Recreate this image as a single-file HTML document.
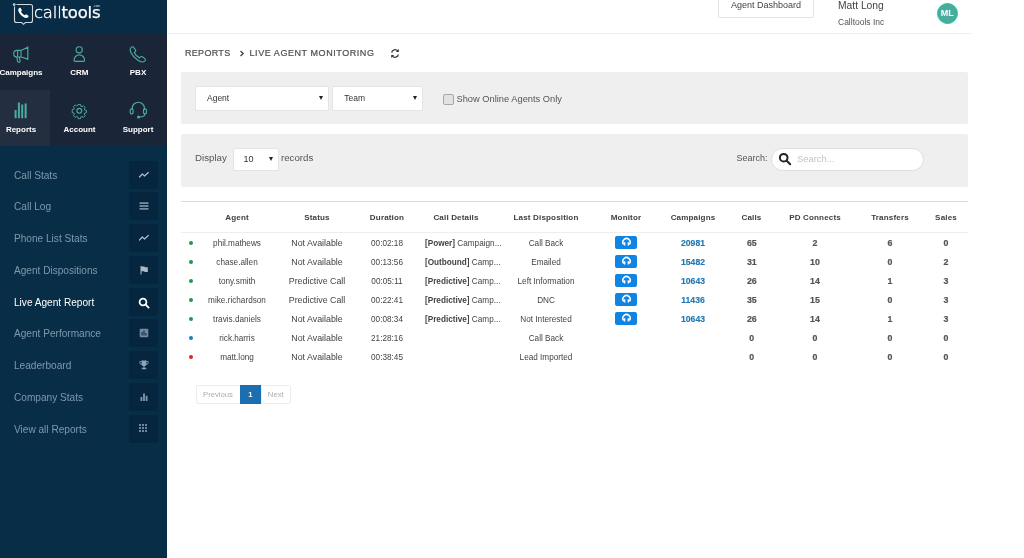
<!DOCTYPE html>
<html lang="en">
<head>
<meta charset="utf-8">
<title>Live Agent Monitoring</title>
<style>
*{box-sizing:border-box;margin:0;padding:0}
html,body{width:1024px;height:558px;overflow:hidden;background:#fff;font-family:"Liberation Sans","DejaVu Sans",sans-serif;color:#333}
#wrap{position:absolute;left:0;top:0;width:1024px;height:558px;will-change:transform}
.abs{position:absolute}
#side{position:absolute;left:0;top:0;width:167px;height:558px;background:#082d47}
#logo{position:absolute;left:0;top:0;width:167px;height:34px;background:#082c46;z-index:2}
#grid{position:absolute;left:0;top:33px;width:167px;height:113px;background:#1b2538}
.tile{position:absolute;width:50px;height:57px;text-align:center}
.tile.on{background:#242e41}
.lb{position:absolute;transform:translateX(-50%);font-size:8px;line-height:10px;font-weight:bold;color:#fff;white-space:nowrap}
.mi{position:absolute;left:0;width:167px;height:28px}
.mi b{position:absolute;left:14px;top:1px;line-height:28px;font-size:10.100px;font-weight:normal;color:#8198ad;white-space:nowrap}
.mi.on b{color:#fff}
.mi i{position:absolute;left:129px;top:0;width:29px;height:28px;background:#06263f;display:block}
.mi i svg{position:absolute;left:50%;top:50%;transform:translate(-50%,-50%)}
#head{position:absolute;left:168px;top:0;width:804px;height:34px;border-bottom:1px solid #f0f0f0;background:#fff}
.panel{position:absolute;left:181px;width:787px;background:#efefef;border-radius:2px}
.sel{position:absolute;background:#fff;border:1px solid #e4e4e4;border-radius:2px;font-size:9px;color:#333;white-space:nowrap}
.sel em{position:absolute;right:5px;top:50%;margin-top:-2px;width:0;height:0;border-left:2.500px solid transparent;border-right:2.500px solid transparent;border-top:4px solid #222}
.tx{position:absolute;white-space:nowrap;font-size:9px;color:#555}
.t{position:absolute;white-space:nowrap;transform:translateX(-50%);text-align:center;line-height:12px}
.h{font-size:8.050px;letter-spacing:.15px;font-weight:bold;color:#404040}
.c{font-size:8.200px;color:#444;line-height:12px}
.s{font-size:8.850px}
.c b{color:#444}
.n{font-size:8.800px;color:#555;font-weight:bold;-webkit-text-stroke:.2px #555}
.l{font-size:8.600px;color:#2277b5;font-weight:bold;-webkit-text-stroke:.15px #2277b5}
.dot{position:absolute;width:4px;height:4px;border-radius:50%;left:188.700px}
.mon{position:absolute;left:614.700px;width:22.500px;height:13px;background:#0f84e3;border-radius:2px}
.mon svg{position:absolute;left:6.100px;top:1.400px}
.pg{position:absolute;top:384.500px;height:19px;line-height:18px;font-size:7.700px;color:#adadad;text-align:center;border:1px solid #ededed;background:#fff}
</style>
</head>
<body><div id="wrap">
<div id="side">
  <div id="logo">
    <svg class="abs" style="left:11px;top:2px" width="24" height="24" viewBox="0 0 24 24" fill="none" stroke="#cfd8e0" stroke-width="1.1">
      <path d="M5.500 2.500h14a2 2 0 0 1 2 2v14a2 2 0 0 1-2 2h-5.200l-1.800 1.800-1.800-1.800H5.500a2 2 0 0 1-2-2v-14"/>
      <circle cx="3.200" cy="2.600" r="0.900"/>
      <path d="M8 6.200c.5-.6 1.300-.6 1.700 0l1 1.500c.3.500.2 1-.2 1.400l-.5.500c.8 1.700 2 2.900 3.700 3.700l.5-.5c.4-.4.900-.5 1.400-.2l1.500 1c.6.400.6 1.200 0 1.700-1.200 1.100-2.800.900-4.600-.2-2.200-1.400-3.700-3-4.700-5-.8-1.500-.8-2.900.2-3.900z" fill="#fff" stroke="none"/>
    </svg>
    <div class="abs" style="left:34px;top:2.500px;font-size:16.500px;line-height:20px;color:#fff;letter-spacing:-0.2px;font-family:'DejaVu Sans','Liberation Sans',sans-serif;font-weight:200;white-space:nowrap;-webkit-text-stroke:.35px #fff">call<span style="font-weight:normal;-webkit-text-stroke:.25px #fff">tools</span></div>
    <div class="abs" style="left:93.500px;top:4.500px;font-size:3px;line-height:3px;color:#dfe6ec;letter-spacing:0">.com</div>
  </div>
  <div id="grid">
    <div class="tile on" style="left:0;top:57px;width:50px;height:56px"></div>
    <!-- Campaigns -->
    <svg class="abs" style="left:11px;top:11.500px" width="20" height="20" viewBox="0 0 20 20" fill="none" stroke="#4baaa4" stroke-width="1.150" stroke-linejoin="round" stroke-linecap="round"><path d="M10 5.400H6a3.300 3.300 0 0 0 0 6.600h4zM10 5.400l6.800-3.200v11.900L10 12M16.800 1.800v12.700M6.600 6v5.400M5.800 12.200l.8 4.200a1 1 0 0 0 1 .8h.5a1 1 0 0 0 1-1.200l-.7-3.800"/></svg>
    <span class="lb" style="left:21px;top:35px">Campaigns</span>
    <!-- CRM -->
    <svg class="abs" style="left:69px;top:11.500px" width="20" height="20" viewBox="0 0 20 20" fill="none" stroke="#4baaa4" stroke-width="1.150"><circle cx="10.200" cy="4.800" r="3.100"/><path d="M5 15.300a5.300 5.400 0 0 1 10.600 0a1 1 0 0 1-1 1h-8.600a1 1 0 0 1-1-1z"/></svg>
    <span class="lb" style="left:79.300px;top:35px">CRM</span>
    <!-- PBX -->
    <svg class="abs" style="left:128.700px;top:12px" width="18.400" height="18.400" viewBox="0 0 18 18" fill="none" stroke="#4baaa4" stroke-width="1.100" stroke-linejoin="round"><path d="M2 2.500c.8-1 2-1 2.700 0l1.600 2.300c.4.600.3 1.300-.2 1.800l-.9.900c1.100 2.300 2.800 4 5.100 5.100l.9-.9c.5-.5 1.200-.6 1.800-.2l2.300 1.600c1 .7 1 1.900 0 2.700-1.700 1.400-4.200.9-7.200-1.300C5 12.300 3.100 10 1.900 7.400.9 5.300.9 3.600 2 2.500z"/></svg>
    <span class="lb" style="left:138px;top:35px">PBX</span>
    <!-- Reports -->
    <svg class="abs" style="left:11px;top:67px" width="20" height="20" viewBox="0 0 20 20" fill="#4baaa4"><rect x="3.600" y="10" width="2" height="8.200"/><rect x="6.900" y="2.500" width="2" height="15.700"/><rect x="10.200" y="4.500" width="2" height="13.700"/><rect x="13.600" y="3.500" width="2.100" height="14.700"/></svg>
    <span class="lb" style="left:21px;top:91.500px">Reports</span>
    <!-- Account -->
    <svg class="abs" style="left:69px;top:67px" width="20" height="20" viewBox="0 0 20 20" fill="none" stroke="#4baaa4" stroke-width="1.150"><circle cx="10.300" cy="10.800" r="2.400"/><path d="M7.600 1.500h2.800l.4 2 1.400.6 1.700-1.100 2 2-1.100 1.700.6 1.400 2 .4v2.800l-2 .4-.6 1.400 1.100 1.700-2 2-1.700-1.100-1.400.6-.4 2H7.600l-.4-2-1.400-.6-1.700 1.100-2-2 1.100-1.700-.6-1.400-2-.4V7.600l2-.4.600-1.400-1.100-1.700 2-2 1.700 1.100 1.400-.6z" stroke-linejoin="round" transform="translate(2.700 3.200) scale(0.845)"/></svg>
    <span class="lb" style="left:79.500px;top:91.500px">Account</span>
    <!-- Support -->
    <svg class="abs" style="left:128px;top:67px" width="20" height="20" viewBox="0 0 20 20" fill="none" stroke="#4baaa4" stroke-width="1.150" stroke-linecap="round"><path d="M4.200 9.500V8.300a6.100 6.100 0 0 1 12.200 0v1.200"/><rect x="2.200" y="8.800" width="2.900" height="5" rx="1.400"/><rect x="15.500" y="8.800" width="2.900" height="5" rx="1.400"/><path d="M17 13.800c0 2.200-2.400 3.200-5.500 3.200"/><circle cx="10.600" cy="17" r="1" fill="#4baaa4"/></svg>
    <span class="lb" style="left:138px;top:91.500px">Support</span>
  </div>
<div class="mi" style="top:160.50px"><b>Call Stats</b><i><svg width="12" height="12" viewBox="0 0 12 12" fill="none" stroke="#aebbc7" stroke-width="1.2" stroke-linejoin="round" stroke-linecap="round"><path d="M1.500 8l2.800-3 2.200 2 3.800-3.500"/></svg></i></div>
<div class="mi" style="top:192.25px"><b>Call Log</b><i><svg width="12" height="12" viewBox="0 0 12 12" fill="#aebbc7"><rect x="1.500" y="2.500" width="9" height="1.200"/><rect x="1.500" y="5.400" width="9" height="1.200"/><rect x="1.500" y="8.300" width="9" height="1.200"/></svg></i></div>
<div class="mi" style="top:224.00px"><b>Phone List Stats</b><i><svg width="12" height="12" viewBox="0 0 12 12" fill="none" stroke="#aebbc7" stroke-width="1.2" stroke-linejoin="round" stroke-linecap="round"><path d="M1.500 8l2.800-3 2.200 2 3.800-3.500"/></svg></i></div>
<div class="mi" style="top:255.75px"><b>Agent Dispositions</b><i><svg width="12" height="12" viewBox="0 0 12 12" fill="#aebbc7"><path d="M2.500 2h1v8.500h-1zM3.500 2.500h3l.3.800h3v4.700h-3.300l-.3-.8h-2.700z"/></svg></i></div>
<div class="mi on" style="top:287.50px"><b>Live Agent Report</b><i><svg width="14" height="14" viewBox="0 0 14 14" fill="none" stroke="#fff" stroke-width="1.800" stroke-linecap="round" style="margin-top:1.200px;margin-left:.3px"><circle cx="6" cy="6" r="3.400"/><path d="M8.700 8.700l2.900 2.900"/></svg></i></div>
<div class="mi" style="top:319.25px"><b>Agent Performance</b><i><svg width="12" height="12" viewBox="0 0 12 12"><rect x="1.700" y="1.700" width="8.600" height="8.600" rx="1" fill="#74899d"/><rect x="3.600" y="5" width="1" height="3.500" fill="#08273f"/><rect x="5.500" y="3.500" width="1" height="5" fill="#08273f"/><rect x="7.400" y="6" width="1" height="2.500" fill="#08273f"/></svg></i></div>
<div class="mi" style="top:351.00px"><b>Leaderboard</b><i><svg width="12" height="12" viewBox="0 0 12 12" fill="#8fa3b5"><path d="M3.500 1.500h5v3.200a2.500 2.500 0 0 1-5 0zM5.500 7h1v1.800h-1zM3.800 8.800h4.400v1.400H3.800z"/><path d="M3.500 2.500H1.800v1a2 2 0 0 0 2 2M8.500 2.500h1.700v1a2 2 0 0 1-2 2" fill="none" stroke="#8fa3b5" stroke-width=".8"/></svg></i></div>
<div class="mi" style="top:382.75px"><b>Company Stats</b><i><svg width="12" height="12" viewBox="0 0 12 12" fill="#8298ab"><rect x="2.500" y="6" width="1.800" height="4"/><rect x="5.100" y="2.500" width="1.800" height="7.500"/><rect x="7.700" y="4.800" width="1.800" height="5.200"/></svg></i></div>
<div class="mi" style="top:414.50px"><b>View all Reports</b><i><svg width="12" height="12" viewBox="0 0 12 12" fill="#6f879c" style="margin:-.6px 0 0 -.7px"><rect x="2" y="2" width="2" height="2"/><rect x="2" y="5" width="2" height="2"/><rect x="2" y="8" width="2" height="2"/><rect x="5" y="2" width="2" height="2"/><rect x="5" y="5" width="2" height="2"/><rect x="5" y="8" width="2" height="2"/><rect x="8" y="2" width="2" height="2"/><rect x="8" y="5" width="2" height="2"/><rect x="8" y="8" width="2" height="2"/></svg></i></div>

</div>
<div id="head">
  <div class="abs" style="left:550px;top:-6px;width:96px;height:23.500px;border:1px solid #e3e3e3;border-radius:2px"></div>
  <div class="tx" style="left:563px;top:-0.500px;font-size:9px;color:#444">Agent Dashboard</div>
  <div class="tx" style="left:670px;top:-0.500px;font-size:10.300px;color:#444">Matt Long</div>
  <div class="tx" style="left:670px;top:17px;font-size:8.500px;color:#555">Calltools Inc</div>
  <div class="abs" style="left:768.700px;top:3px;width:21px;height:21px;border-radius:50%;background:#4aaa9b;border:1.500px solid #1fc4a6;color:#fff;font-size:9px;font-weight:bold;text-align:center;line-height:18px">ML</div>
</div>
<div class="tx" style="left:185px;top:48px;font-size:9px;color:#505050;-webkit-text-stroke:.22px #505050;letter-spacing:.3px;line-height:11px">REPORTS</div>
<svg class="abs" style="left:238.500px;top:50px" width="6" height="7" viewBox="0 0 6 7" fill="none" stroke="#444" stroke-width="1.300"><path d="M1.500 1l2.700 2.500-2.700 2.500"/></svg>
<div class="tx" style="left:249.500px;top:48px;font-size:9px;color:#505050;-webkit-text-stroke:.22px #505050;letter-spacing:.56px;line-height:11px">LIVE AGENT MONITORING</div>
<svg class="abs" style="left:390px;top:48px" width="10" height="11" viewBox="0 0 10 11" fill="none" stroke="#3c3c3c" stroke-width="1.250"><path d="M1.600 4.500a3.500 3.500 0 0 1 6.300-1.300M8.400 6.500a3.500 3.500 0 0 1-6.300 1.300"/><path d="M8.800 1v3h-3zM1.200 10v-3h3z" fill="#333" stroke="none"/></svg>

<div class="panel" style="top:72px;height:52px"></div>
<div class="sel" style="left:195px;top:85.500px;width:134px;height:25px;line-height:23px;padding-left:11px;font-size:8.500px">Agent<em></em></div>
<div class="sel" style="left:332.200px;top:85.500px;width:91.300px;height:25px;line-height:23px;padding-left:11px;font-size:8.500px">Team<em></em></div>
<div class="abs" style="left:443px;top:94px;width:10.500px;height:10.500px;border:1px solid #a6a6a6;border-radius:2px;background:#e2e2e2"></div>
<div class="tx" style="left:456.500px;top:93px;line-height:12px;font-size:9.300px">Show Online Agents Only</div>

<div class="panel" style="top:134px;height:53px"></div>
<div class="tx" style="left:195px;top:152px;line-height:12px;font-size:9.700px">Display</div>
<div class="sel" style="left:233px;top:148px;width:45.500px;height:22.500px;line-height:21px;padding-left:9.500px;font-size:9px">10<em></em></div>
<div class="tx" style="left:281px;top:152px;line-height:12px;font-size:9.700px">records</div>
<div class="tx" style="left:736.500px;top:152px;line-height:12px">Search:</div>
<div class="abs" style="left:771px;top:147.500px;width:152.500px;height:23px;border:1px solid #dedede;border-radius:12px;background:#fff"></div>
<svg class="abs" style="left:778px;top:152px" width="14" height="14" viewBox="0 0 14 14" fill="none" stroke="#222" stroke-width="2" stroke-linecap="round"><circle cx="5.700" cy="5.700" r="3.800"/><path d="M8.700 8.700l3.500 3.500"/></svg>
<div class="tx" style="left:797px;top:153px;line-height:12px;color:#c4c4c4;font-size:9.400px">Search...</div>

<div class="abs" style="left:181px;top:201px;width:787px;height:1px;background:#dcdcdc"></div>
<div class="abs" style="left:181px;top:232px;width:787px;height:1px;background:#eeeeee"></div>
<div class="t h" style="left:237px;top:212px">Agent</div>
<div class="t h" style="left:317px;top:212px">Status</div>
<div class="t h" style="left:387px;top:212px">Duration</div>
<div class="t h" style="left:456px;top:212px">Call Details</div>
<div class="t h" style="left:546px;top:212px">Last Disposition</div>
<div class="t h" style="left:626px;top:212px">Monitor</div>
<div class="t h" style="left:693px;top:212px">Campaigns</div>
<div class="t h" style="left:751.5px;top:212px">Calls</div>
<div class="t h" style="left:815px;top:212px">PD Connects</div>
<div class="t h" style="left:890px;top:212px">Transfers</div>
<div class="t h" style="left:946px;top:212px">Sales</div>
<div class="dot" style="top:240.5px;background:#1a9b48"></div><div class="t c" style="left:237px;top:237.5px">phil.mathews</div><div class="t c s" style="left:317px;top:236.7px">Not Available</div><div class="t c" style="left:387px;top:237.5px">00:02:18</div><div class="c abs" style="left:425px;top:237.5px;white-space:nowrap"><b>[Power]</b> Campaign...</div><div class="t c" style="left:546px;top:237.5px">Call Back</div><div class="mon" style="top:236.0px"><svg width="11" height="10" viewBox="0 0 11 10" fill="none" stroke="#fff" stroke-width="1.600"><path d="M2.700 7.400A3.600 3.600 0 1 1 8.300 7.400"/><path d="M3.700 5.300v3.200M7.300 5.300v3.200" stroke-width="1.300"/></svg></div><div class="t l" style="left:693px;top:236.7px">20981</div><div class="t n" style="left:751.8px;top:236.7px">65</div><div class="t n" style="left:815px;top:236.7px">2</div><div class="t n" style="left:890px;top:236.7px">6</div><div class="t n" style="left:946px;top:236.7px">0</div>
<div class="dot" style="top:259.5px;background:#1a9b48"></div><div class="t c" style="left:237px;top:256.5px">chase.allen</div><div class="t c s" style="left:317px;top:255.7px">Not Available</div><div class="t c" style="left:387px;top:256.5px">00:13:56</div><div class="c abs" style="left:425px;top:256.5px;white-space:nowrap"><b>[Outbound]</b> Camp...</div><div class="t c" style="left:546px;top:256.5px">Emailed</div><div class="mon" style="top:255.0px"><svg width="11" height="10" viewBox="0 0 11 10" fill="none" stroke="#fff" stroke-width="1.600"><path d="M2.700 7.400A3.600 3.600 0 1 1 8.300 7.400"/><path d="M3.700 5.300v3.200M7.300 5.300v3.200" stroke-width="1.300"/></svg></div><div class="t l" style="left:693px;top:255.7px">15482</div><div class="t n" style="left:751.8px;top:255.7px">31</div><div class="t n" style="left:815px;top:255.7px">10</div><div class="t n" style="left:890px;top:255.7px">0</div><div class="t n" style="left:946px;top:255.7px">2</div>
<div class="dot" style="top:278.5px;background:#1a9b48"></div><div class="t c" style="left:237px;top:275.5px">tony.smith</div><div class="t c s" style="left:317px;top:274.7px">Predictive Call</div><div class="t c" style="left:387px;top:275.5px">00:05:11</div><div class="c abs" style="left:425px;top:275.5px;white-space:nowrap"><b>[Predictive]</b> Camp...</div><div class="t c" style="left:546px;top:275.5px">Left Information</div><div class="mon" style="top:274.0px"><svg width="11" height="10" viewBox="0 0 11 10" fill="none" stroke="#fff" stroke-width="1.600"><path d="M2.700 7.400A3.600 3.600 0 1 1 8.300 7.400"/><path d="M3.700 5.300v3.200M7.300 5.300v3.200" stroke-width="1.300"/></svg></div><div class="t l" style="left:693px;top:274.7px">10643</div><div class="t n" style="left:751.8px;top:274.7px">26</div><div class="t n" style="left:815px;top:274.7px">14</div><div class="t n" style="left:890px;top:274.7px">1</div><div class="t n" style="left:946px;top:274.7px">3</div>
<div class="dot" style="top:297.5px;background:#1a9b48"></div><div class="t c" style="left:237px;top:294.5px">mike.richardson</div><div class="t c s" style="left:317px;top:293.7px">Predictive Call</div><div class="t c" style="left:387px;top:294.5px">00:22:41</div><div class="c abs" style="left:425px;top:294.5px;white-space:nowrap"><b>[Predictive]</b> Camp...</div><div class="t c" style="left:546px;top:294.5px">DNC</div><div class="mon" style="top:293.0px"><svg width="11" height="10" viewBox="0 0 11 10" fill="none" stroke="#fff" stroke-width="1.600"><path d="M2.700 7.400A3.600 3.600 0 1 1 8.300 7.400"/><path d="M3.700 5.300v3.200M7.300 5.300v3.200" stroke-width="1.300"/></svg></div><div class="t l" style="left:693px;top:293.7px">11436</div><div class="t n" style="left:751.8px;top:293.7px">35</div><div class="t n" style="left:815px;top:293.7px">15</div><div class="t n" style="left:890px;top:293.7px">0</div><div class="t n" style="left:946px;top:293.7px">3</div>
<div class="dot" style="top:316.5px;background:#1a9b48"></div><div class="t c" style="left:237px;top:313.5px">travis.daniels</div><div class="t c s" style="left:317px;top:312.7px">Not Available</div><div class="t c" style="left:387px;top:313.5px">00:08:34</div><div class="c abs" style="left:425px;top:313.5px;white-space:nowrap"><b>[Predictive]</b> Camp...</div><div class="t c" style="left:546px;top:313.5px">Not Interested</div><div class="mon" style="top:312.0px"><svg width="11" height="10" viewBox="0 0 11 10" fill="none" stroke="#fff" stroke-width="1.600"><path d="M2.700 7.400A3.600 3.600 0 1 1 8.300 7.400"/><path d="M3.700 5.300v3.200M7.300 5.300v3.200" stroke-width="1.300"/></svg></div><div class="t l" style="left:693px;top:312.7px">10643</div><div class="t n" style="left:751.8px;top:312.7px">26</div><div class="t n" style="left:815px;top:312.7px">14</div><div class="t n" style="left:890px;top:312.7px">1</div><div class="t n" style="left:946px;top:312.7px">3</div>
<div class="dot" style="top:335.5px;background:#1b7fc4"></div><div class="t c" style="left:237px;top:332.5px">rick.harris</div><div class="t c s" style="left:317px;top:331.7px">Not Available</div><div class="t c" style="left:387px;top:332.5px">21:28:16</div><div class="t c" style="left:546px;top:332.5px">Call Back</div><div class="t n" style="left:751.8px;top:331.7px">0</div><div class="t n" style="left:815px;top:331.7px">0</div><div class="t n" style="left:890px;top:331.7px">0</div><div class="t n" style="left:946px;top:331.7px">0</div>
<div class="dot" style="top:354.5px;background:#e2231a"></div><div class="t c" style="left:237px;top:351.5px">matt.long</div><div class="t c s" style="left:317px;top:350.7px">Not Available</div><div class="t c" style="left:387px;top:351.5px">00:38:45</div><div class="t c" style="left:546px;top:351.5px">Lead Imported</div><div class="t n" style="left:751.8px;top:350.7px">0</div><div class="t n" style="left:815px;top:350.7px">0</div><div class="t n" style="left:890px;top:350.7px">0</div><div class="t n" style="left:946px;top:350.7px">0</div>

<div class="pg" style="left:195.500px;width:45px;border-radius:2px 0 0 2px">Previous</div>
<div class="pg" style="left:240px;width:21px;background:#1b6fb0;border-color:#1b6fb0;color:#fff;font-weight:bold">1</div>
<div class="pg" style="left:260.500px;width:30.500px;border-radius:0 2px 2px 0">Next</div>
</div></body>
</html>
